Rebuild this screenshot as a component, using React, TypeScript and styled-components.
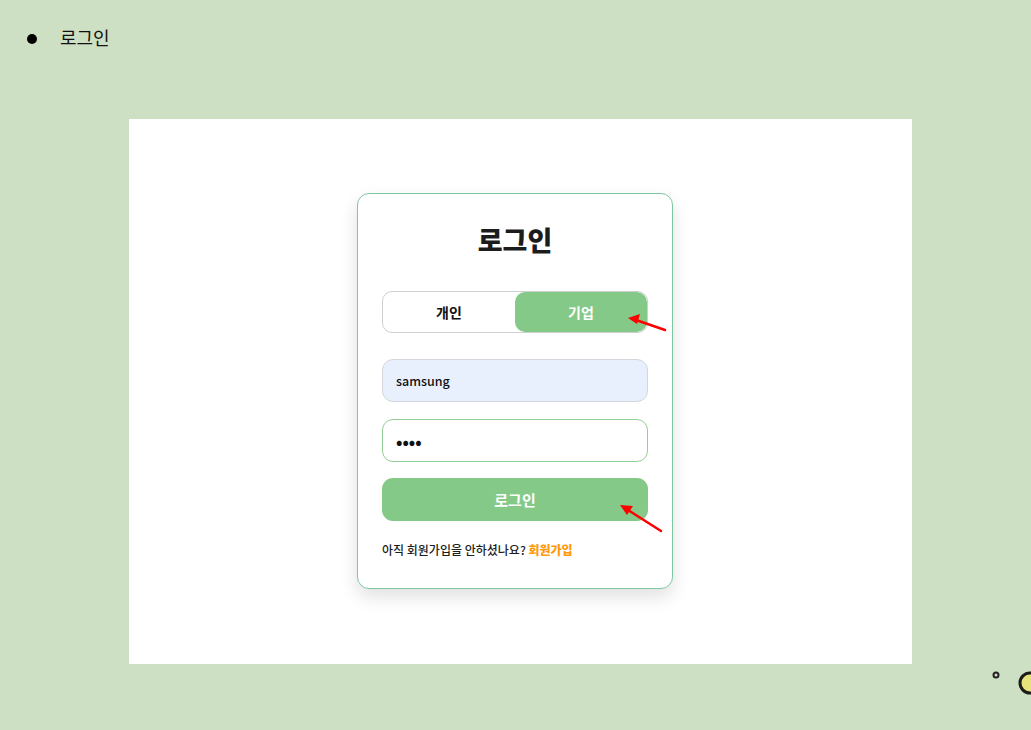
import styled, { createGlobalStyle } from 'styled-components';

const GlobalStyle = createGlobalStyle`
  html, body {
    margin: 0;
    padding: 0;
    background: #cee0c3;
    font-family: "Noto Sans CJK KR", "Noto Sans", sans-serif;
  }
  body {
    width: 1031px;
    height: 730px;
    overflow: hidden;
    position: relative;
  }
`;

const Menu = styled.ul`
  margin: 0;
  padding: 24px 0 0 60px;
  height: 119px;
  box-sizing: border-box;
  list-style: none;
`;

const MenuItem = styled.li`
  position: relative;
  font-size: 18px;
  line-height: 26px;
  color: #111;

  &::before {
    content: '';
    position: absolute;
    left: -33px;
    top: 10px;
    width: 10px;
    height: 10px;
    border-radius: 50%;
    background: #000;
  }
`;

const Frame = styled.div`
  margin-left: 129px;
  width: 783px;
  height: 545px;
  background: #fff;
  display: flex;
  align-items: flex-start;
  padding: 74px 0 0 228px;
  box-sizing: border-box;
`;

const Card = styled.div`
  width: 316px;
  height: 396px;
  box-sizing: border-box;
  border: 1px solid #7ec7a2;
  border-radius: 12px;
  background: #fff;
  box-shadow: 0 8px 18px rgba(0, 0, 0, 0.12);
  padding: 26px 24px 0 24px;
  display: flex;
  flex-direction: column;
`;

const Title = styled.h2`
  margin: 0;
  text-align: center;
  font-size: 27px;
  font-weight: 900;
  line-height: 40px;
  color: #1c1c1c;
`;

const Toggle = styled.div`
  margin-top: 31px;
  height: 42px;
  box-sizing: border-box;
  border: 1px solid #cfcfcf;
  border-radius: 10px;
  display: flex;
  overflow: hidden;
`;

const ToggleOption = styled.div<{ $active?: boolean }>`
  flex: 1;
  display: flex;
  align-items: center;
  justify-content: center;
  font-size: 14px;
  font-weight: 700;
  border-radius: 10px;
  color: ${(p) => (p.$active ? '#fff' : '#111')};
  background: ${(p) => (p.$active ? '#85c988' : 'transparent')};
`;

const Field = styled.div<{ $filled?: boolean }>`
  height: 43px;
  box-sizing: border-box;
  border-radius: 11px;
  border: 1px solid ${(p) => (p.$filled ? '#d3d6dc' : '#93d095')};
  background: ${(p) => (p.$filled ? '#e8f0fe' : '#fff')};
  display: flex;
  align-items: center;
  padding-left: 13px;
  font-size: 12.5px;
  font-weight: 500;
  color: #111;
  margin-top: ${(p) => (p.$filled ? '26px' : '17px')};
`;

const Dots = styled.span`
  font-size: 16px;
  font-weight: 900;
`;

const SubmitButton = styled.div`
  margin-top: 16px;
  height: 43px;
  border-radius: 11px;
  background: #84c987;
  color: #fff;
  font-size: 15px;
  font-weight: 700;
  display: flex;
  align-items: center;
  justify-content: center;
`;

const Footer = styled.p`
  margin: 20px 0 0 0;
  font-size: 12px;
  font-weight: 500;
  color: #1c1c1c;
`;

const JoinLink = styled.span`
  color: #ff9a0a;
  font-weight: 900;
`;

const Annotations = styled.svg`
  position: absolute;
  left: 0;
  top: 0;
  pointer-events: none;
`;

const Cursor = styled.svg`
  position: absolute;
  left: 988px;
  top: 664px;
`;

export default function App() {
  return (
    <>
      <GlobalStyle />
      <Menu>
        <MenuItem>로그인</MenuItem>
      </Menu>
      <Frame>
        <Card>
          <Title>로그인</Title>
          <Toggle>
            <ToggleOption>개인</ToggleOption>
            <ToggleOption $active>기업</ToggleOption>
          </Toggle>
          <Field $filled>samsung</Field>
          <Field>
            <Dots>••••</Dots>
          </Field>
          <SubmitButton>로그인</SubmitButton>
          <Footer>
            아직 회원가입을 안하셨나요? <JoinLink>회원가입</JoinLink>
          </Footer>
        </Card>
      </Frame>
      <Annotations width="1031" height="730">
        <g stroke="#f00" strokeWidth="2.5" fill="#f00" strokeLinecap="round">
          <line x1="665" y1="330" x2="636" y2="320" />
          <polygon points="628,318 640,314 637,324" stroke="none" />
          <line x1="661" y1="531" x2="628" y2="510" />
          <polygon points="620,505 633,506 627,515" stroke="none" />
        </g>
      </Annotations>
      <Cursor width="43" height="40" viewBox="0 0 43 40">
        <circle cx="8" cy="11" r="2.5" fill="#d9dccb" stroke="#222" strokeWidth="2" />
        <circle cx="42" cy="19" r="10" fill="#e6e37a" stroke="#1c1c1c" strokeWidth="3" />
      </Cursor>
    </>
  );
}
